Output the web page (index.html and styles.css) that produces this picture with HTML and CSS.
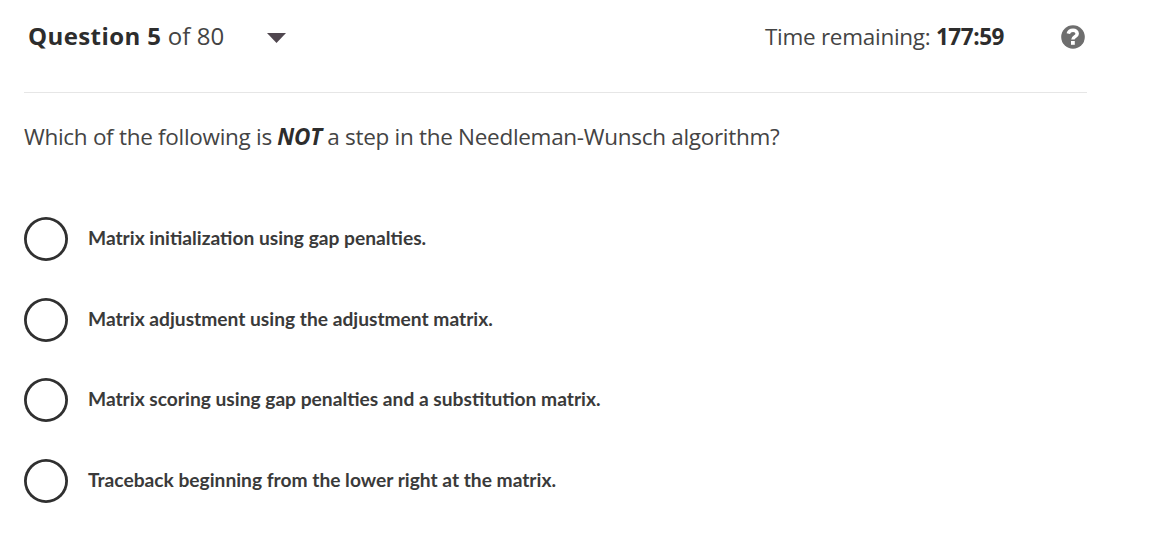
FILE: index.html
```html
<!DOCTYPE html>
<html lang="en">

<head>
    <meta charset="UTF-8" />
    <title>Question 5 of 80</title>
    <link rel="stylesheet" href="styles.css">
</head>

<body>
    <header class="quiz-header">
        <div class="counter"><b>Question 5</b> of 80</div>
        <svg class="caret" width="19" height="10" viewBox="0 0 19 10"><path d="M0 0h19L9.5 10z" /></svg>
        <div class="timer">Time remaining: <b>177:59</b></div>
        <svg class="help" width="24" height="24" viewBox="0 0 24 24">
            <circle cx="12" cy="12" r="11.8" />
            <path d="M7.3 8.7C8.3 4 16.2 4.2 16.2 8.7c0 3.1-4.3 2.8-4.3 5.9" />
            <rect x="10" y="16" width="3.8" height="3.8" />
        </svg>
    </header>
    <main>
        <p class="question">Which of the following is <b><i>NOT</i></b> a step in the Needleman-Wunsch algorithm?</p>
        <form class="answers">
            <label class="answer"><input type="radio" name="answer"><span>Matrix initialization using gap penalties.</span></label>
            <label class="answer"><input type="radio" name="answer"><span>Matrix adjustment using the adjustment matrix.</span></label>
            <label class="answer"><input type="radio" name="answer"><span>Matrix scoring using gap penalties and a substitution matrix.</span></label>
            <label class="answer"><input type="radio" name="answer"><span>Traceback beginning from the lower right at the matrix.</span></label>
        </form>
    </main>
</body>

</html>
```
FILE: styles.css
```css
body {
    margin: 0;
    padding: 0 71px 0 24px;
    background: #fff;
    color: #444;
    font-family: "Open Sans", sans-serif;
    font-size: 22.5px;
}

b {
    color: #2d2d2d;
}

.quiz-header {
    display: flex;
    align-items: center;
    box-sizing: border-box;
    height: 93px;
    padding: 0 2px 19px 4px;
    border-bottom: 1px solid #e6e6e6;
}

.counter {
    margin-top: -2px;
    font-size: 24px;
    letter-spacing: 0.1px;
}

.counter b {
    letter-spacing: 0.4px;
}

.caret {
    margin-left: 43px;
    margin-top: 3px;
    fill: #50474f;
}

.timer {
    margin-left: auto;
    letter-spacing: -0.28px;
}

.timer b {
    letter-spacing: -0.45px;
}

.help {
    margin-left: 57px;
    fill: #6e6e6e;
}

.help path {
    fill: none;
    stroke: #fff;
    stroke-width: 3.5;
}

.help rect {
    fill: #fff;
}

.question {
    margin: 28px 0 0;
    line-height: 32px;
    letter-spacing: -0.3px;
}

.answers {
    display: flex;
    flex-direction: column;
    gap: 36.5px;
    margin-top: 64px;
}

.answer {
    display: flex;
    align-items: center;
    gap: 20px;
    height: 44px;
    color: #3a3a3a;
    font: bold 19.2px/24px Lato, sans-serif;
}

.answer span {
    padding-bottom: 2px;
}

.answer input {
    appearance: none;
    width: 44px;
    height: 44px;
    margin: 0;
    border-radius: 50%;
    box-shadow: inset 0 0 0 2.8px #303030;
}
```
